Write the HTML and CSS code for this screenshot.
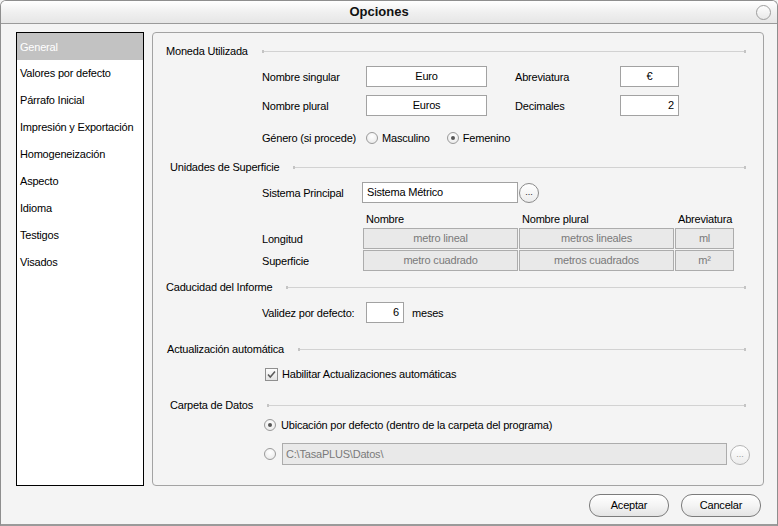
FILE: index.html
```html
<!DOCTYPE html>
<html lang="es">
<head>
<meta charset="utf-8">
<title>Opciones</title>
<link rel="stylesheet" href="styles.css">
</head>
<body>
<div class="window">
  <div class="titlebar">
    <div class="tb-side"></div>
    <div class="tb-title">Opciones</div>
    <div class="tb-side tb-right"><span class="tb-close"></span></div>
  </div>

  <div class="main">
    <ul class="nav">
      <li class="nav-item selected">General</li>
      <li class="nav-item">Valores por defecto</li>
      <li class="nav-item">Párrafo Inicial</li>
      <li class="nav-item">Impresión y Exportación</li>
      <li class="nav-item">Homogeneización</li>
      <li class="nav-item">Aspecto</li>
      <li class="nav-item">Idioma</li>
      <li class="nav-item">Testigos</li>
      <li class="nav-item">Visados</li>
    </ul>

    <div class="panel">
      <div class="sec-head"><span class="sec-title">Moneda Utilizada</span><span class="sec-line"></span></div>
      <div class="money-grid">
        <span class="lbl">Nombre singular</span>
        <div class="field center">Euro</div>
        <span></span>
        <span class="lbl">Abreviatura</span>
        <div class="field center">€</div>
        <span class="lbl">Nombre plural</span>
        <div class="field center">Euros</div>
        <span></span>
        <span class="lbl">Decimales</span>
        <div class="field right">2</div>
      </div>
      <div class="gender-row">
        <span class="lbl w104">Género (si procede)</span>
        <span class="radio"></span><span class="opt">Masculino</span>
        <span class="radio checked gap17"></span><span class="opt">Femenino</span>
      </div>

      <div class="sec-head mt13"><span class="sec-title ind4">Unidades de Superficie</span><span class="sec-line"></span></div>
      <div class="sys-row">
        <span class="lbl w100">Sistema Principal</span>
        <div class="field left w156">Sistema Métrico</div>
        <span class="dots-btn">...</span>
      </div>
      <div class="units">
        <span></span>
        <span class="th">Nombre</span>
        <span class="th">Nombre plural</span>
        <span class="th">Abreviatura</span>
        <span class="lbl">Longitud</span>
        <div class="cell">metro lineal</div>
        <div class="cell">metros lineales</div>
        <div class="cell">ml</div>
        <span class="lbl">Superficie</span>
        <div class="cell">metro cuadrado</div>
        <div class="cell">metros cuadrados</div>
        <div class="cell">m²</div>
      </div>

      <div class="sec-head mt8"><span class="sec-title">Caducidad del Informe</span><span class="sec-line"></span></div>
      <div class="valid-row">
        <span class="lbl w104">Validez por defecto:</span>
        <div class="field right w38">6</div>
        <span class="lbl meses">meses</span>
      </div>

      <div class="sec-head mt18"><span class="sec-title ind1">Actualización automática</span><span class="sec-line"></span></div>
      <div class="check-row">
        <span class="checkbox"><svg width="11" height="11" viewBox="0 0 11 11"><path d="M2 5.5 L4.3 8 L9 2.5" fill="none" stroke="#5a5a5a" stroke-width="1.5"/></svg></span>
        <span class="opt">Habilitar Actualizaciones automáticas</span>
      </div>

      <div class="sec-head mt15"><span class="sec-title ind4">Carpeta de Datos</span><span class="sec-line"></span></div>
      <div class="data-row">
        <span class="radio checked"></span><span class="opt g5">Ubicación por defecto (dentro de la carpeta del programa)</span>
      </div>
      <div class="path-row">
        <span class="radio"></span>
        <div class="field disabled path">C:\TasaPLUS\Datos\</div>
        <span class="dots-btn faded">...</span>
      </div>
    </div>
  </div>

  <div class="footer">
    <span class="btn">Aceptar</span>
    <span class="btn">Cancelar</span>
  </div>
</div>
</body>
</html>
```

FILE: styles.css
```css
* { box-sizing: border-box; }
html, body { margin: 0; padding: 0; }
body {
  font-family: "Liberation Sans", Arial, sans-serif;
  font-size: 11px;
  letter-spacing: -0.2px;
  color: #000;
  background: #f4f4f4;
}
.window {
  width: 778px;
  height: 526px;
  border: 1px solid #8e8e8e;
  border-bottom: 2px solid #9a9a9a;
  border-radius: 6px 6px 0 0;
  background: #f4f4f4;
  overflow: hidden;
  display: flex;
  flex-direction: column;
}
.titlebar {
  height: 23px;
  flex: none;
  display: grid;
  grid-template-columns: 1fr auto 1fr;
  align-items: center;
  background: linear-gradient(#ffffff, #f0f0f0 50%, #e6e6e6);
  border-bottom: 1px solid #9a9a9a;
}
.tb-title {
  font-weight: bold;
  font-size: 13px;
  letter-spacing: 0;
  line-height: 22px;
  color: #111;
  margin-right: 20px;
}
.tb-right { display: flex; justify-content: flex-end; padding-right: 6px; }
.tb-close {
  width: 15px; height: 15px;
  border-radius: 50%;
  border: 1px solid #9c9c9c;
  background: linear-gradient(#fdfdfd, #e9e9e9);
  margin-top: 1px;
}
.main {
  display: flex;
  padding: 8px 13px 0 15px;
  height: 462px;
  flex: none;
}
.nav {
  list-style: none;
  margin: 0;
  padding: 1px 0 0 0;
  width: 128px;
  height: 454px;
  background: #fff;
  border: 1px solid #000;
}
.nav-item {
  height: 27px;
  line-height: 27px;
  padding-left: 3px;
  white-space: nowrap;
}
.nav-item.selected { background: #c2c2c2; color: #fff; margin-top: -1px; padding-top: 1px; }
.panel {
  margin-left: 8px;
  width: 612px;
  height: 454px;
  border: 1px solid #a3a3a3;
  border-radius: 4px;
  padding: 10px 17px 0 13px;
}
.sec-head {
  display: flex;
  align-items: center;
  height: 16px;
}
.sec-title { white-space: nowrap; line-height: 16px; }
.ind4 { padding-left: 4px; }
.ind1 { padding-left: 1px; }
.sec-line {
  flex: 1;
  height: 1px;
  background: #d2d2d2;
  margin-left: 14px;
  position: relative;
}
.sec-line::before, .sec-line::after {
  content: "";
  position: absolute;
  top: -1px;
  width: 2px; height: 3px;
  background: #c4c4c4;
}
.sec-line::before { left: 0; }
.sec-line::after { right: 0; }
.mt8 { margin-top: 8px; }
.mt13 { margin-top: 13px; }
.mt15 { margin-top: 15px; }
.mt18 { margin-top: 18px; }
.lbl { white-space: nowrap; line-height: 16px; }
.w100 { width: 100px; flex: none; }
.w104 { width: 104px; flex: none; }
.field {
  height: 21px;
  line-height: 19px;
  background: #fff;
  border: 1px solid #a2a2a2;
  padding: 0 4px;
  white-space: nowrap;
  overflow: hidden;
  flex: none;
}
.center { text-align: center; }
.right { text-align: right; }
.left { text-align: left; }
.money-grid {
  margin: 7px 0 0 96px;
  display: grid;
  grid-template-columns: 104px 121px 28px 105px 59px;
  grid-template-rows: 21px 21px;
  row-gap: 8px;
  align-items: center;
}
.gender-row {
  margin: 14px 0 0 96px;
  display: flex;
  align-items: center;
  height: 16px;
}
.radio {
  width: 12px; height: 12px;
  flex: none;
  border-radius: 50%;
  border: 1px solid #9a9a9a;
  background: radial-gradient(circle at 50% 35%, #ffffff, #e6e6e6);
  display: inline-flex;
  align-items: center;
  justify-content: center;
}
.radio.checked::after {
  content: "";
  width: 4px; height: 4px;
  border-radius: 50%;
  background: #555;
}
.gap17 { margin-left: 17px; }
.opt { margin-left: 4px; white-space: nowrap; line-height: 16px; }
.g5 { margin-left: 5px; }
.sys-row {
  margin: 7px 0 0 96px;
  display: flex;
  align-items: center;
  height: 21px;
}
.w156 { width: 156px; }
.dots-btn {
  width: 20px; height: 20px;
  flex: none;
  margin-left: 1px;
  margin-top: 1px;
  border-radius: 50%;
  border: 1px solid #8a8a8a;
  background: linear-gradient(#ffffff, #ececec);
  font-size: 9px;
  letter-spacing: 0;
  line-height: 16px;
  text-align: center;
  color: #222;
}
.dots-btn.faded { border-color: #b4b4b4; color: #999; margin-left: 3px; }
.units {
  margin: 9px 0 0 96px;
  display: grid;
  grid-template-columns: 100px 155px 155px 59px;
  grid-template-rows: 15px 21px 21px;
  column-gap: 1px;
  row-gap: 1px;
  align-items: center;
}
.th { padding-left: 3px; line-height: 15px; white-space: nowrap; }
.cell {
  height: 21px;
  line-height: 19px;
  background: #e9e9e9;
  border: 1px solid #acacac;
  color: #7a7a7a;
  text-align: center;
  white-space: nowrap;
}
.valid-row {
  margin: 7px 0 0 96px;
  display: flex;
  align-items: center;
  height: 21px;
}
.w38 { width: 38px; }
.meses { margin-left: 8px; }
.check-row {
  margin: 9px 0 0 99px;
  display: flex;
  align-items: center;
  height: 16px;
}
.checkbox {
  width: 13px; height: 13px;
  flex: none;
  border: 1px solid #8f8f8f;
  background: linear-gradient(#fdfdfd, #e4e4e4);
  display: inline-flex;
  align-items: center;
  justify-content: center;
}
.data-row {
  margin: 4px 0 0 98px;
  display: flex;
  align-items: center;
  height: 16px;
}
.path-row {
  margin: 10px 0 0 98px;
  display: flex;
  align-items: center;
  height: 22px;
}
.field.disabled {
  background: #e9e9e9;
  border-color: #acacac;
  color: #7a7a7a;
  height: 22px;
  line-height: 20px;
  padding-left: 3px;
}
.path { width: 445px; margin-left: 6px; }
.footer {
  display: flex;
  justify-content: flex-end;
  gap: 12px;
  padding: 8px 16px 0 0;
}
.btn {
  width: 80px;
  height: 23px;
  border-radius: 11px;
  border: 1px solid #7c7c7c;
  background: linear-gradient(#ffffff, #f4f4f4 50%, #e4e4e4);
  text-align: center;
  line-height: 21px;
}
```
